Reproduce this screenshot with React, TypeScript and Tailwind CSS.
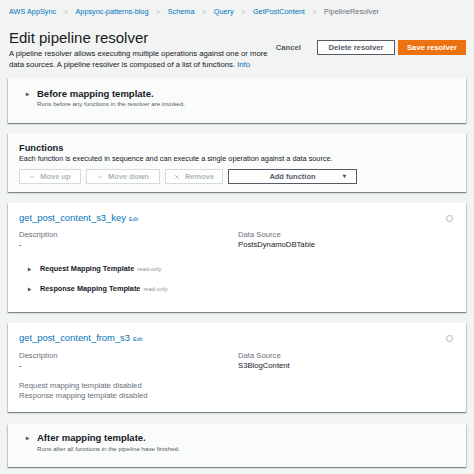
import React from 'react';

const CARD_SHADOW =
  'shadow-[0_1px_1px_0_rgba(0,28,36,0.3),1px_1px_1px_0_rgba(0,28,36,0.15),-1px_1px_1px_0_rgba(0,28,36,0.15)]';

function Caret({ className = '' }: { className?: string }) {
  return (
    <svg viewBox="0 0 6 6" className={`w-[5px] h-[5px] ${className}`}>
      <path d="M1 0.5 L5.5 3 L1 5.5 Z" fill="#545b64" />
    </svg>
  );
}

function Crumb({ label, last }: { label: string; last?: boolean }) {
  return (
    <>
      <span className={last ? 'text-[#687078]' : 'text-[#0073bb]'}>{label}</span>
      {!last && <span className="text-[#aab7b8] mx-[7.5px]">&gt;</span>}
    </>
  );
}

function ToolButton({ icon, label, w }: { icon: React.ReactNode; label: string; w: string }) {
  return (
    <div className={`${w} h-[15px] border border-[#d5dbdb] bg-white flex items-center justify-center gap-[5px] text-[#aab7b8] font-bold`}>
      {icon}
      <span>{label}</span>
    </div>
  );
}

function FunctionCard({
  name,
  height,
  children,
}: {
  name: string;
  height: string;
  children: React.ReactNode;
}) {
  return (
    <div className={`${height} bg-white ${CARD_SHADOW} px-[11px] pt-[9px]`}>
      <div className="flex items-center justify-between h-[12px]">
        <div className="flex items-baseline gap-[3px]">
          <span className="text-[9.4px] leading-[12px] text-[#0073bb]">{name}</span>
          <span className="text-[5.5px] text-[#0073bb]">Edit</span>
        </div>
        <div className="w-[7px] h-[7px] rounded-full border border-[#aab7b8] mr-[2px]" />
      </div>
      {children}
    </div>
  );
}

export default function App() {
  return (
    <div
      className="w-[474px] h-[474px] overflow-hidden bg-[#f2f3f3] px-[8px] text-[#16191f] text-[7.7px]"
      style={{ fontFamily: '"Liberation Sans", Arial, sans-serif' }}
    >
      {/* Breadcrumb */}
      <div className="pt-[7px] h-[17px] leading-[10px] text-[7.3px] whitespace-nowrap pl-[1px]">
        <Crumb label="AWS AppSync" />
        <Crumb label="Appsync-patterns-blog" />
        <Crumb label="Schema" />
        <Crumb label="Query" />
        <Crumb label="GetPostContent" />
        <Crumb label="PipelineResolver" last />
      </div>

      {/* Header */}
      <div className="flex justify-between mt-[12px] pl-[1px]">
        <div>
          <h1 className="text-[15px] leading-[18px] font-normal">Edit pipeline resolver</h1>
          <p className="mt-[2px] leading-[10.5px] text-[7.7px]">
            A pipeline resolver allows executing multiple operations against one or more
            <br />
            data sources. A pipeline resolver is composed of a list of functions.{' '}
            <span className="text-[#0073bb]">Info</span>
          </p>
        </div>
        <div className="flex items-center mt-[11px] h-[15px] font-bold text-[7.7px]">
          <span className="text-[#545b64] mr-[16px]">Cancel</span>
          <div className="w-[78px] h-[15px] border border-[#545b64] bg-white flex items-center justify-center text-[#545b64]">
            Delete resolver
          </div>
          <div className="w-[68px] h-[15px] ml-[3px] bg-[#ec7211] border border-[#ec7211] flex items-center justify-center text-white">
            Save resolver
          </div>
        </div>
      </div>

      {/* Before mapping */}
      <div className={`mt-[8px] h-[45px] bg-[#fafbfb] ${CARD_SHADOW} pt-[10px] pl-[17px]`}>
        <div className="flex items-center gap-[7px] h-[12px]">
          <Caret />
          <span className="text-[9.5px] leading-[12px] font-bold">Before mapping template.</span>
        </div>
        <div className="pl-[12px] text-[6.2px] leading-[8px] text-[#545b64]">
          Runs before any functions in the resolver are invoked.
        </div>
      </div>

      {/* Functions */}
      <div className={`mt-[10px] h-[59px] bg-[#fafbfb] ${CARD_SHADOW} pt-[9px] px-[11px]`}>
        <div className="text-[9.3px] leading-[12px] font-bold">Functions</div>
        <div className="leading-[9px] text-[7.3px]">
          Each function is executed in sequence and can execute a single operation against a data source.
        </div>
        <div className="flex gap-[5px] mt-[6px] text-[7.5px]">
          <ToolButton
            w="w-[62px]"
            label="Move up"
            icon={
              <svg viewBox="0 0 8 8" className="w-[6px] h-[6px]">
                <path d="M1 5.5 L4 2.5 L7 5.5" fill="none" stroke="#aab7b8" strokeWidth="1" />
              </svg>
            }
          />
          <ToolButton
            w="w-[74px]"
            label="Move down"
            icon={
              <svg viewBox="0 0 8 8" className="w-[6px] h-[6px]">
                <path d="M1 2.5 L4 5.5 L7 2.5" fill="none" stroke="#aab7b8" strokeWidth="1" />
              </svg>
            }
          />
          <ToolButton
            w="w-[58px]"
            label="Remove"
            icon={
              <svg viewBox="0 0 8 8" className="w-[6px] h-[6px]">
                <path d="M1.5 1.5 L6.5 6.5 M6.5 1.5 L1.5 6.5" fill="none" stroke="#aab7b8" strokeWidth="1" />
              </svg>
            }
          />
          <div className="w-[129px] h-[15px] border border-[#545b64] bg-white flex items-center pl-[14px] pr-[9px] font-bold text-[#545b64]">
            <span className="flex-1 text-center">Add function</span>
            <svg viewBox="0 0 6 6" className="w-[5px] h-[5px]">
              <path d="M0.5 1 L5.5 1 L3 5 Z" fill="#545b64" />
            </svg>
          </div>
        </div>
      </div>

      {/* Function 1 */}
      <div className="mt-[11px]">
        <FunctionCard name="get_post_content_s3_key" height="h-[109px]">
          <div className="grid grid-cols-[219px_1fr] mt-[6px] leading-[10px]">
            <div>
              <div className="text-[#687078]">Description</div>
              <div>-</div>
            </div>
            <div>
              <div className="text-[#687078]">Data Source</div>
              <div>PostsDynamoDBTable</div>
            </div>
          </div>
          <div className="pl-[8px] mt-[14px] flex items-center gap-[8px] h-[10px]">
            <Caret />
            <span className="font-bold text-[7.3px] text-[#16191f]">Request Mapping Template</span>
            <span className="text-[5.8px] text-[#879596] -ml-[5px]">read-only</span>
          </div>
          <div className="pl-[8px] mt-[10px] flex items-center gap-[8px] h-[10px]">
            <Caret />
            <span className="font-bold text-[7.3px] text-[#16191f]">Response Mapping Template</span>
            <span className="text-[5.8px] text-[#879596] -ml-[5px]">read-only</span>
          </div>
        </FunctionCard>
      </div>

      {/* Function 2 */}
      <div className="mt-[11px]">
        <FunctionCard name="get_post_content_from_s3" height="h-[89px]">
          <div className="grid grid-cols-[219px_1fr] mt-[7px] leading-[10px]">
            <div>
              <div className="text-[#687078]">Description</div>
              <div>-</div>
            </div>
            <div>
              <div className="text-[#687078]">Data Source</div>
              <div>S3BlogContent</div>
            </div>
          </div>
          <div className="mt-[10px] leading-[10px] text-[#687078]">
            <div>Request mapping template disabled</div>
            <div>Response mapping template disabled</div>
          </div>
        </FunctionCard>
      </div>

      {/* After mapping */}
      <div className={`mt-[12px] h-[43px] bg-[#fafbfb] ${CARD_SHADOW} pt-[8px] pl-[17px]`}>
        <div className="flex items-center gap-[7px] h-[12px]">
          <Caret />
          <span className="text-[9.5px] leading-[12px] font-bold">After mapping template.</span>
        </div>
        <div className="pl-[12px] text-[6.2px] leading-[10px] text-[#545b64]">
          Runs after all functions in the pipeline have finished.
        </div>
      </div>
    </div>
  );
}
